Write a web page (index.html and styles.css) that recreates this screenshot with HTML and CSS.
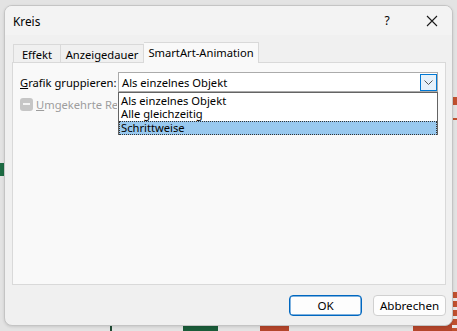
FILE: index.html
```html
<!DOCTYPE html>
<html lang="de">
<head>
<meta charset="utf-8">
<title>Kreis</title>
<link rel="stylesheet" href="styles.css">
</head>
<body>
<div class="bg bg-green-left"></div>
<div class="bg bg-line-bottom"></div>
<div class="bg bg-green-bottom"></div>
<div class="bg bg-orange-bottom"></div>
<div class="bg bg-orange-bottom2"></div>
<div class="bg bg-orange-right1"></div>
<div class="bg bg-orange-right2"></div>
<div class="bg bg-orange-right3"></div>

<div class="dialog">
  <div class="titlebar">
    <span class="title">Kreis</span>
    <span class="help">?</span>
    <span class="close">
      <svg width="12" height="12" viewBox="0 0 12 12"><path d="M1 1L11 11M11 1L1 11" stroke="#1a1a1a" stroke-width="1.1" fill="none"/></svg>
    </span>
  </div>
  <div class="content">
    <div class="tabs">
      <div class="tab tab-effekt">Effekt</div>
      <div class="tab tab-dauer">Anzeigedauer</div>
      <div class="tab tab-active">SmartArt-Animation</div>
    </div>
    <div class="panel">
      <div class="row">
        <label class="label"><u>G</u>rafik gruppieren:</label>
        <div class="combo">
          <span class="combo-text">Als einzelnes Objekt</span>
          <span class="combo-btn">
            <svg width="9" height="5" viewBox="0 0 9 5"><path d="M0.5 0.5L4.5 4.5L8.5 0.5" stroke="#555" stroke-width="1" fill="none"/></svg>
          </span>
          <ul class="list">
            <li class="item">Als einzelnes Objekt</li>
            <li class="item">Alle gleichzeitig</li>
            <li class="item item-sel">Schrittweise</li>
          </ul>
        </div>
      </div>
      <div class="check-row">
        <span class="checkbox"><span class="dash"></span></span>
        <span class="check-label"><u>U</u>mgekehrte Reihenfolge</span>
      </div>
    </div>
    <div class="footer">
      <button class="btn btn-default">OK</button>
      <button class="btn">Abbrechen</button>
    </div>
  </div>
</div>
</body>
</html>
```
FILE: styles.css
```css
html, body {
  margin: 0;
  padding: 0;
}
body {
  width: 457px;
  height: 331px;
  overflow: hidden;
  position: relative;
  background: #e3e3e3;
  font-family: "Noto Sans", "Open Sans", sans-serif;
  font-size: 11.2px;
  color: #000;
}
.bg { position: absolute; }
.bg-green-left { left: 0; top: 163px; width: 4px; height: 13px; background: #1d6b43; }
.bg-line-bottom { left: 110px; top: 320px; width: 2px; height: 11px; background: #1f4b33; }
.bg-green-bottom { left: 183px; top: 320px; width: 35px; height: 11px; background: #1a5c39; }
.bg-orange-bottom { left: 260px; top: 320px; width: 29px; height: 11px; background: #b4462b; }
.bg-orange-bottom2 { left: 413px; top: 320px; width: 44px; height: 11px; background: #b4462b; }
.bg-orange-right1 { left: 452px; top: 97px; width: 5px; height: 8px; background: #c0512f; }
.bg-orange-right2 { left: 452px; top: 118px; width: 5px; height: 2px; background: #c0512f; }
.bg-orange-right3 { left: 452px; top: 292px; width: 5px; height: 39px; background: repeating-linear-gradient(#c0512f 0 6px, #e8e8e8 6px 9px); }

.dialog {
  position: absolute;
  left: 4px;
  top: 5px;
  width: 449px;
  height: 321px;
  box-sizing: border-box;
  border: 1px solid #c4c4c4;
  border-radius: 8px;
  background: #f0f0f0;
  overflow: hidden;
  display: flex;
  flex-direction: column;
  box-shadow: 0 1px 3px rgba(0,0,0,0.12);
}
.titlebar {
  height: 29px;
  flex: none;
  background: #f3f3f3;
  display: flex;
  align-items: center;
  padding-left: 8px;
}
.title { flex: 1; font-size: 11.8px; margin-top: 1px; }
.help { width: 12px; font-size: 12px; margin-right: 33px; text-align: center; }
.close { width: 12px; height: 12px; margin-right: 14px; display: flex; }

.content {
  flex: 1;
  display: flex;
  flex-direction: column;
  padding: 8px 6px 0 7px;
}
.tabs {
  display: flex;
  align-items: flex-end;
  height: 20px;
  position: relative;
  z-index: 1;
  margin-bottom: -1px;
}
.tab {
  height: 18px;
  box-sizing: border-box;
  border: 1px solid #d9d9d9;
  border-bottom: none;
  background: #f0f0f0;
  display: flex;
  align-items: center;
  justify-content: center;
  padding-top: 1px;
  margin-bottom: 1px;
}
.tab-effekt { width: 48px; margin-left: 1px; }
.tab-dauer { width: 83px; border-left: none; }
.tab-active {
  width: 115px;
  height: 21px;
  background: #f9f9f9;
  margin-bottom: 0;
  border-left: none;
  padding-bottom: 3px;
}
.panel {
  height: 223px;
  box-sizing: border-box;
  border: 1px solid #d9d9d9;
  background: #f9f9f9;
  padding: 9px 0 0 7px;
  flex: none;
}
.row {
  display: flex;
  align-items: center;
  height: 20px;
}
.label { width: 98px; flex: none; }
.combo {
  position: relative;
  width: 320px;
  height: 20px;
  box-sizing: border-box;
  border: 1px solid #ababab;
  background: #fff;
  display: flex;
  align-items: center;
}
.combo-text { flex: 1; padding-left: 3px; }
.combo-btn {
  width: 17px;
  height: 17px;
  box-sizing: border-box;
  border: 1px solid #0078d4;
  background: #e5f1fb;
  display: flex;
  align-items: center;
  justify-content: center;
}
.list {
  position: absolute;
  left: -1px;
  top: 19px;
  width: 320px;
  height: 43px;
  box-sizing: border-box;
  margin: 0;
  padding: 1px 0 0 0;
  list-style: none;
  border: 1px solid #646464;
  background: #fff;
  display: flex;
  flex-direction: column;
}
.item {
  height: 13px;
  line-height: 13px;
  padding-left: 2px;
  box-sizing: border-box;
}
.item-sel {
  height: 14px;
  line-height: 14px;
  background: #99c9ef;
  outline: 1px dotted #333;
  outline-offset: -1px;
  margin-top: 1px;
}
.check-row {
  display: flex;
  align-items: center;
  margin-top: 5px;
  height: 14px;
}
.checkbox {
  width: 13px;
  height: 13px;
  border-radius: 3px;
  background: #c6c6c6;
  display: flex;
  align-items: center;
  justify-content: center;
  margin-right: 3px;
  flex: none;
}
.dash { width: 7px; height: 1.5px; background: #f4f4f4; }
.check-label {
  color: #9d9d9d;
  white-space: nowrap;
  width: 81px;
  overflow: hidden;
}

.footer {
  display: flex;
  justify-content: flex-end;
  gap: 11px;
  padding-top: 10px;
}
.btn {
  width: 73px;
  height: 21px;
  box-sizing: border-box;
  border: 1px solid #d0d0d0;
  border-radius: 4px;
  background: #fdfdfd;
  font-family: inherit;
  font-size: 11.6px;
  color: #000;
  padding: 0;
}
.btn-default { border-color: #0067c0; box-shadow: inset 0 0 0 0.5px #0067c0; }
```
